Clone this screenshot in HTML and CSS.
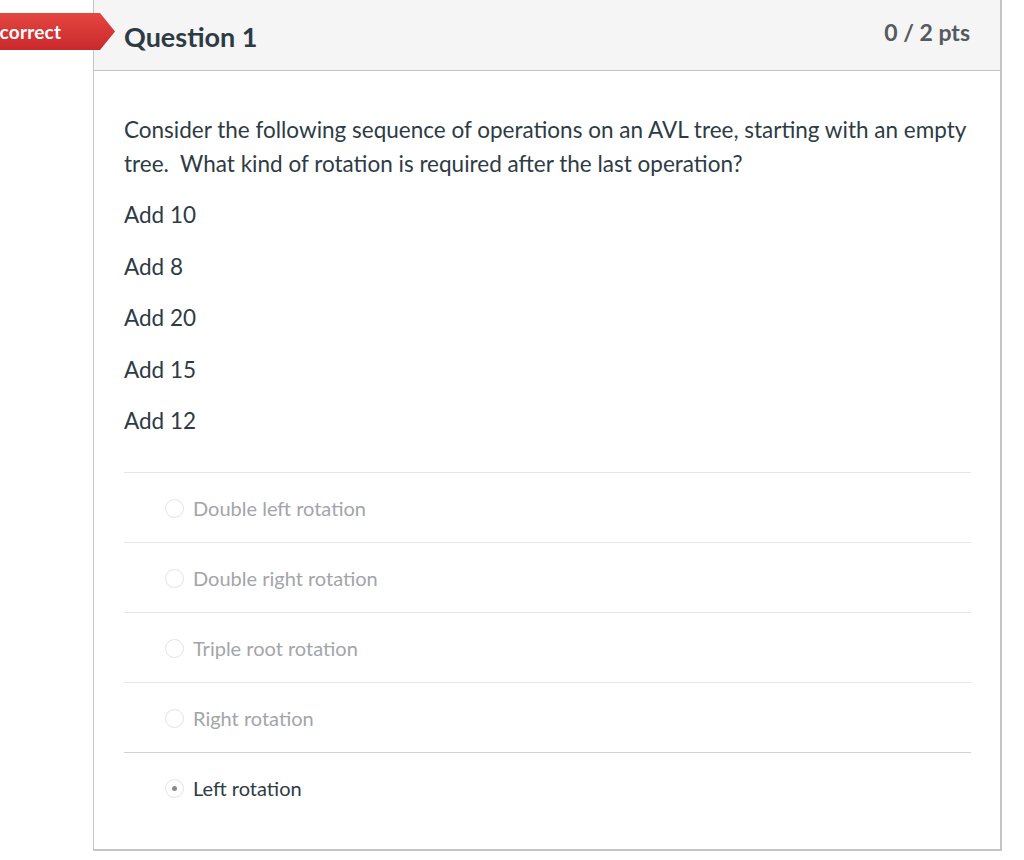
FILE: index.html
```html
<!DOCTYPE html>
<html>
<head>
<meta charset="utf-8">
<link rel="stylesheet" href="styles.css">
</head>
<body>
<div class="page">
  <div class="badge"><span>Incorrect</span></div>
  <div class="card">
    <div class="card-header">
      <h2 class="title">Question 1</h2>
      <div class="pts">0 / 2 pts</div>
    </div>
    <div class="card-body">
      <div class="question">
        <p>Consider the following sequence of operations on an AVL tree, starting with an empty tree.&nbsp; What kind of rotation is required after the last operation?</p>
        <p>Add 10</p>
        <p>Add 8</p>
        <p>Add 20</p>
        <p>Add 15</p>
        <p>Add 12</p>
      </div>
      <div class="answers">
        <div class="answer"><span class="radio"></span><span class="label">Double left rotation</span></div>
        <div class="answer"><span class="radio"></span><span class="label">Double right rotation</span></div>
        <div class="answer"><span class="radio"></span><span class="label">Triple root rotation</span></div>
        <div class="answer"><span class="radio"></span><span class="label">Right rotation</span></div>
        <div class="answer selected"><span class="radio checked"></span><span class="label">Left rotation</span></div>
      </div>
    </div>
  </div>
</div>
</body>
</html>
```

FILE: styles.css
```css
html, body {
  margin: 0;
  padding: 0;
  background: #fff;
}
body {
  font-family: Lato, "Open Sans", sans-serif;
  color: #2d3b45;
}
.page {
  position: relative;
  width: 1024px;
  height: 860px;
  overflow: hidden;
}
.badge {
  position: absolute;
  left: -30px;
  top: 13px;
  width: 145px;
  height: 37px;
  box-sizing: border-box;
  padding-left: 13px;
  display: flex;
  align-items: center;
  background: linear-gradient(#e44640, #c9292c);
  clip-path: polygon(0 0, calc(100% - 15px) 0, 100% 50%, calc(100% - 15px) 100%, 0 100%);
  color: #fff;
  font-size: 19px;
  font-weight: 700;
  letter-spacing: 0.2px;
  z-index: 2;
}
.card {
  margin-left: 93px;
  width: 909px;
  height: 851px;
  box-sizing: border-box;
  border: 1px solid #c4c4c4;
  border-top: none;
  border-bottom-width: 2px;
  border-right-width: 2px;
}
.card-header {
  height: 71px;
  box-sizing: border-box;
  background: #f5f5f5;
  border-bottom: 1px solid #c4c4c4;
  display: flex;
  align-items: center;
  justify-content: space-between;
  padding: 3px 30px 0 30px;
}
.title {
  margin: 0;
  font-size: 27px;
  font-weight: 700;
  color: #2d3b45;
}
.pts {
  font-size: 23px;
  font-weight: 700;
  color: #555a5e;
  margin-top: -9px;
}
.card-body {
  padding: 42px 29px 28px 30px;
}
.question p {
  margin: 0 0 17.5px 0;
  font-size: 22.5px;
  line-height: 34px;
}
.question p:first-child {
  margin-bottom: 17px;
}
.question p:last-child {
  margin-bottom: 0;
}
.answers {
  margin-top: 34px;
}
.answer {
  height: 70px;
  box-sizing: border-box;
  border-top: 1px solid #e6e6e6;
  display: flex;
  align-items: center;
  padding-left: 41px;
}
.answer:last-child {
  border-top-color: #d2d2d2;
}
.radio {
  width: 19px;
  height: 19px;
  border-radius: 50%;
  border: 1px solid #e3e3e3;
  background: #fff;
  box-sizing: border-box;
  margin-right: 9px;
  margin-top: 2px;
  position: relative;
}
.radio.checked::after {
  content: "";
  position: absolute;
  left: 6px;
  top: 6px;
  width: 5px;
  height: 5px;
  border-radius: 50%;
  background: #8a8a8a;
}
.label {
  font-size: 20px;
  color: #a3a5a8;
}
.selected .label {
  color: #2d3b45;
}
```
